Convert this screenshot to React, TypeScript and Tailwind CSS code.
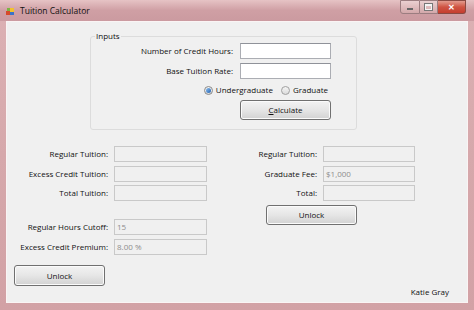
import React from "react";

function Box({ value, enabled }: { value?: string; enabled?: boolean }) {
    return (
        <div
            className={
                "h-[16px] border px-[2px] text-[8px] leading-[14px] " +
                (enabled
                    ? "bg-white border-[#abadb3] border-t-[#8f9299]"
                    : "bg-[#f0f0f0] border-[#c9c9c9] text-[#8d8d8d]")
            }
        >
            {value}
        </div>
    );
}

function Btn({ children, className }: { children: React.ReactNode; className?: string }) {
    return (
        <div
            className={
                "flex items-center justify-center rounded-[3px] border border-[#707070] bg-gradient-to-b from-[#f3f3f3] via-[#e6e6e6] to-[#d2d2d2] text-[8px] text-[#111] shadow-[inset_0_0_0_1px_#fbfbfb] " +
                (className ?? "")
            }
        >
            {children}
        </div>
    );
}

function Label({ text }: { text: string }) {
    return <div className="text-right text-[8px] leading-[16px] text-[#111]">{text}</div>;
}

export default function App() {
    return (
        <div
            className="w-[474px] h-[310px] overflow-hidden bg-gradient-to-b from-[#dcb1b4] via-[#d6a8ab] to-[#d2a1a5] flex flex-col"
            style={{ fontFamily: '"Open Sans", "Noto Sans", sans-serif' }}
        >
            {/* title bar */}
            <div className="h-[21px] flex items-start bg-gradient-to-b from-[#e6c3c5] via-[#cf9fa4] to-[#cb9aa0]">
                <div className="flex items-center gap-[5px] pl-[6px] pt-[5px]">
                    <svg width="9" height="9" viewBox="0 0 9 9">
                        <rect x="0" y="4" width="4" height="4" fill="#d64a2a" />
                        <rect x="4" y="1" width="4" height="4" fill="#f2c12e" />
                        <rect x="4" y="5" width="4" height="3" fill="#3a72c8" />
                        <rect x="1" y="1" width="3" height="3" fill="#7bb443" />
                    </svg>
                    <span className="text-[8.5px] text-[#111]">Tuition Calculator</span>
                </div>
                <div className="ml-auto mr-[8px] flex">
                    <div className="w-[20px] h-[14px] border border-[#9b7d80] rounded-bl-[3px] bg-gradient-to-b from-[#ead0d1] to-[#d3a8aa] flex items-center justify-center">
                        <div className="w-[6px] h-[2px] bg-white border-[0.5px] border-[#666] mt-[4px]" />
                    </div>
                    <div className="w-[18px] h-[14px] border-y border-r border-[#9b7d80] bg-gradient-to-b from-[#ead0d1] to-[#d3a8aa] flex items-center justify-center">
                        <div className="w-[7px] h-[6px] border border-t-2 border-[#f4f4f4] outline outline-[0.5px] outline-[#777]" />
                    </div>
                    <div className="w-[28px] h-[14px] border-y border-r border-[#8a4a42] rounded-br-[3px] bg-gradient-to-b from-[#e29a8d] via-[#cf5443] to-[#c53d2e] flex items-center justify-center text-[8px] font-bold text-white leading-none">
                        ✕
                    </div>
                </div>
            </div>

            {/* client area */}
            <div className="ml-[6px] w-[462px] h-[282px] border border-[#faf4f4] bg-[#f0f0f0] relative">
                {/* inputs group */}
                <div className="ml-[83px] mt-[14px] w-[267px] h-[94px] relative border border-[#dcdcdc] rounded-[3px]">
                    <div className="absolute left-[4px] -top-[7px] bg-[#f0f0f0] px-[1px] text-[8px] leading-[12px] text-[#111]">
                        Inputs
                    </div>
                    <div className="grid grid-cols-[142px_91px] gap-x-[7px] gap-y-[4px] pt-[6px]">
                        <Label text="Number of Credit Hours:" />
                        <Box enabled />
                        <Label text="Base Tuition Rate:" />
                        <Box enabled />
                    </div>
                    <div className="flex items-center justify-end pr-[28px] mt-[4px] h-[14px] text-[8px] text-[#111]">
                        <div className="w-[9px] h-[9px] rounded-full border border-[#8a8a8a] bg-gradient-to-b from-[#f4f4f4] to-[#dcdcdc] flex items-center justify-center">
                            <div className="w-[5px] h-[5px] rounded-full bg-gradient-to-br from-[#8ec0ee] to-[#1d5fb0]" />
                        </div>
                        <span className="ml-[3px]">Undergraduate</span>
                        <div className="ml-[8px] w-[9px] h-[9px] rounded-full border border-[#a0a0a0] bg-gradient-to-b from-[#f4f4f4] to-[#dcdcdc]" />
                        <span className="ml-[3px]">Graduate</span>
                    </div>
                    <Btn className="ml-[149px] mt-[3px] w-[91px] h-[20px]">
                        <span>
                            <span className="underline">C</span>alculate
                        </span>
                    </Btn>
                </div>

                {/* results */}
                <div className="flex mt-[16px]">
                    <div className="w-[200px]">
                        <div className="grid grid-cols-[101px_93px] gap-x-[6px] gap-y-[3.5px]">
                            <Label text="Regular Tuition:" />
                            <Box />
                            <Label text="Excess Credit Tuition:" />
                            <Box />
                            <Label text="Total Tuition:" />
                            <Box />
                        </div>
                        <div className="grid grid-cols-[101px_93px] gap-x-[6px] gap-y-[4px] mt-[18px]">
                            <Label text="Regular Hours Cutoff:" />
                            <Box value="15" />
                            <Label text="Excess Credit Premium:" />
                            <Box value="8.00 %" />
                        </div>
                        <Btn className="ml-[7px] mt-[10px] w-[91px] h-[21px]">Unlock</Btn>
                    </div>
                    <div className="ml-[10px] w-[210px]">
                        <div className="grid grid-cols-[100px_92px] gap-x-[6px] gap-y-[3.5px]">
                            <Label text="Regular Tuition:" />
                            <Box />
                            <Label text="Graduate Fee:" />
                            <Box value="$1,000" />
                            <Label text="Total:" />
                            <Box />
                        </div>
                        <Btn className="ml-[49px] mt-[4px] w-[91px] h-[20px]">Unlock</Btn>
                    </div>
                </div>

                <div className="absolute right-[18px] bottom-[4px] text-[8px] text-[#111]">Katie Gray</div>
            </div>
        </div>
    );
}
